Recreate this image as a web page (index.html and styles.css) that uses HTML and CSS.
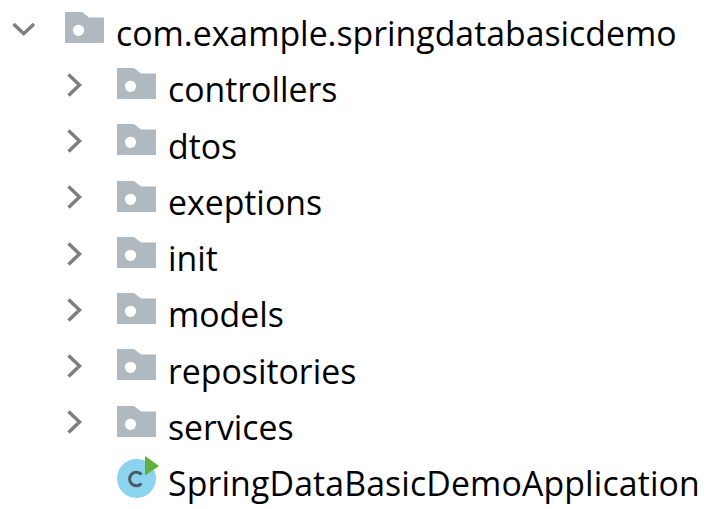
FILE: index.html
```html
<!DOCTYPE html>
<html lang="en">
<head>
<meta charset="utf-8">
<title>Project tree</title>
<link rel="stylesheet" href="styles.css">
</head>
<body>
<ul class="tree">
  <li class="row root">
    <svg class="chev" viewBox="0 0 24 24"><path d="M1.5 7 L11.7 16.7 L22 7"/></svg>
    <svg class="folder" viewBox="0 0 39 31"><path class="fill" d="M0 0H17L24 5.5H39V31H0Z"/><circle class="hole" cx="13.5" cy="18.3" r="5.6"/></svg>
    <span class="label">com.example.springdatabasicdemo</span>
  </li>
  <li class="row child">
    <svg class="chev" viewBox="0 0 24 24"><path d="M4.5 1.5 L15.5 12 L4.5 22.5"/></svg>
    <svg class="folder" viewBox="0 0 39 31"><path class="fill" d="M0 0H17L24 5.5H39V31H0Z"/><circle class="hole" cx="13.5" cy="18.3" r="5.6"/></svg>
    <span class="label">controllers</span>
  </li>
  <li class="row child">
    <svg class="chev" viewBox="0 0 24 24"><path d="M4.5 1.5 L15.5 12 L4.5 22.5"/></svg>
    <svg class="folder" viewBox="0 0 39 31"><path class="fill" d="M0 0H17L24 5.5H39V31H0Z"/><circle class="hole" cx="13.5" cy="18.3" r="5.6"/></svg>
    <span class="label">dtos</span>
  </li>
  <li class="row child">
    <svg class="chev" viewBox="0 0 24 24"><path d="M4.5 1.5 L15.5 12 L4.5 22.5"/></svg>
    <svg class="folder" viewBox="0 0 39 31"><path class="fill" d="M0 0H17L24 5.5H39V31H0Z"/><circle class="hole" cx="13.5" cy="18.3" r="5.6"/></svg>
    <span class="label">exeptions</span>
  </li>
  <li class="row child">
    <svg class="chev" viewBox="0 0 24 24"><path d="M4.5 1.5 L15.5 12 L4.5 22.5"/></svg>
    <svg class="folder" viewBox="0 0 39 31"><path class="fill" d="M0 0H17L24 5.5H39V31H0Z"/><circle class="hole" cx="13.5" cy="18.3" r="5.6"/></svg>
    <span class="label">init</span>
  </li>
  <li class="row child">
    <svg class="chev" viewBox="0 0 24 24"><path d="M4.5 1.5 L15.5 12 L4.5 22.5"/></svg>
    <svg class="folder" viewBox="0 0 39 31"><path class="fill" d="M0 0H17L24 5.5H39V31H0Z"/><circle class="hole" cx="13.5" cy="18.3" r="5.6"/></svg>
    <span class="label">models</span>
  </li>
  <li class="row child">
    <svg class="chev" viewBox="0 0 24 24"><path d="M4.5 1.5 L15.5 12 L4.5 22.5"/></svg>
    <svg class="folder" viewBox="0 0 39 31"><path class="fill" d="M0 0H17L24 5.5H39V31H0Z"/><circle class="hole" cx="13.5" cy="18.3" r="5.6"/></svg>
    <span class="label">repositories</span>
  </li>
  <li class="row child">
    <svg class="chev" viewBox="0 0 24 24"><path d="M4.5 1.5 L15.5 12 L4.5 22.5"/></svg>
    <svg class="folder" viewBox="0 0 39 31"><path class="fill" d="M0 0H17L24 5.5H39V31H0Z"/><circle class="hole" cx="13.5" cy="18.3" r="5.6"/></svg>
    <span class="label">services</span>
  </li>
  <li class="row child leaf">
    <span class="chev-space"></span>
    <svg class="app" viewBox="0 0 44 42">
      <circle class="disc" cx="20.5" cy="22.5" r="19.5"/>
      <path class="c" d="M25.5 18.5 A6.8 6.8 0 1 0 25.5 27.5"/>
      <path class="play" d="M29 0 L43 10 L29 19.5Z"/>
    </svg>
    <span class="label app-label">SpringDataBasicDemoApplication</span>
  </li>
</ul>
</body>
</html>
```
FILE: styles.css
```css
html, body {
  margin: 0;
  padding: 0;
  background: #ffffff;
}
.tree {
  list-style: none;
  margin: 0;
  padding: 5px 0 0 12px;
  font-family: "Open Sans", "Noto Sans", sans-serif;
  font-size: 33.8px;
  color: #000000;
}
.row {
  display: flex;
  align-items: center;
  height: 56.25px;
}
.child {
  padding-left: 52px;
}
.chev {
  width: 24px;
  height: 24px;
  flex: none;
  fill: none;
  stroke: #7f7f7f;
  stroke-width: 3.5;
  margin-bottom: 9px;
}
.chev-space {
  width: 24px;
  flex: none;
}
.folder {
  width: 39px;
  height: 31px;
  flex: none;
  margin-left: 29px;
  margin-bottom: 11.6px;
}
.fill {
  fill: #afb9bf;
}
.hole {
  fill: #ffffff;
}
.label {
  margin-left: 12px;
  white-space: nowrap;
}
.app {
  width: 44px;
  height: 42px;
  flex: none;
  margin-left: 28px;
  margin-bottom: 11.4px;
}
.app-label {
  margin-left: 8px;
  letter-spacing: 0.14px;
}
.disc {
  fill: #8bd3ee;
}
.c {
  fill: none;
  stroke: #4a5a66;
  stroke-width: 3;
}
.play {
  fill: #5fb13c;
}
```
